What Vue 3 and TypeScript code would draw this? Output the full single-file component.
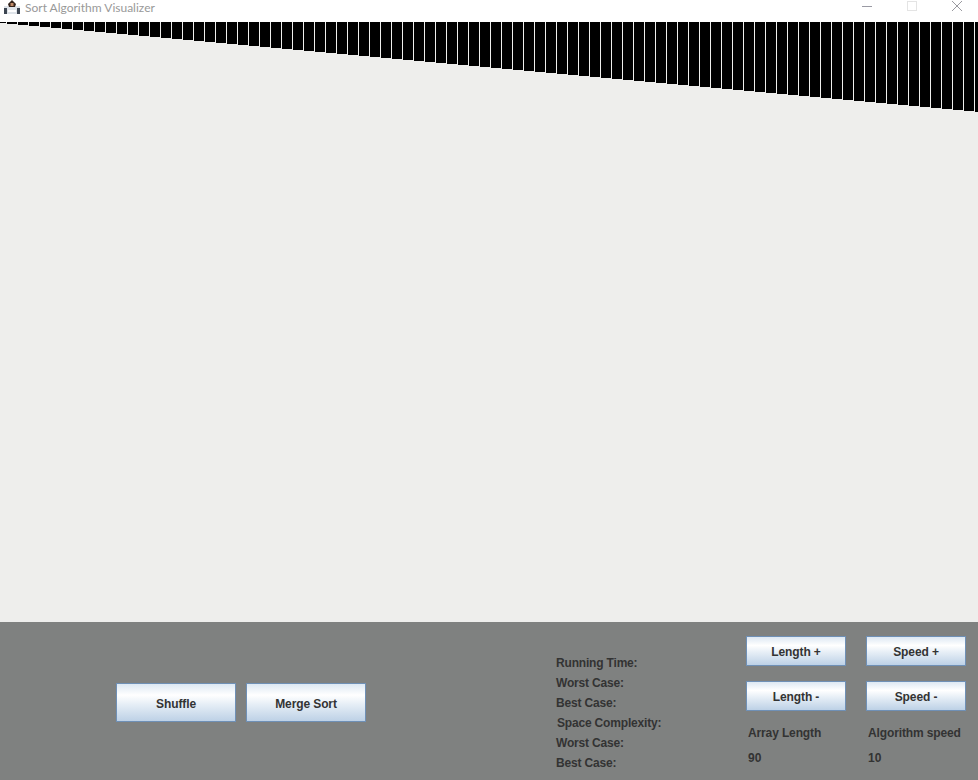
<script setup lang="ts">
const bars: number[] = Array.from({ length: 90 }, (_, i) => i + 1)
const timeLabels: string[] = [
  'Running Time:',
  'Worst Case:',
  'Best Case:',
  'Space Complexity:',
  'Worst Case:',
  'Best Case:',
]
</script>

<template>
  <div class="window">
    <header class="titlebar">
      <svg class="app-icon" width="16" height="16" viewBox="0 0 16 16">
        <rect x="0" y="6" width="16" height="8" fill="#dfe4ea" />
        <rect x="0" y="8" width="3" height="6" fill="#3d4652" />
        <rect x="13" y="8" width="3" height="6" fill="#3d4652" />
        <rect x="4" y="10" width="8" height="2" fill="#ffffff" />
        <path d="M8 0 L12 4 L11 7 L5 7 L4 4 Z" fill="#33231b" />
        <rect x="6.5" y="3" width="3" height="3" fill="#c08a68" />
      </svg>
      <span class="title">Sort Algorithm Visualizer</span>
      <div class="controls">
        <svg class="ctl min" width="10" height="10" viewBox="0 0 10 10">
          <path d="M0 5.5H10" stroke="#9a9aa4" stroke-width="1" />
        </svg>
        <svg class="ctl max" width="10" height="10" viewBox="0 0 10 10">
          <rect x="0.5" y="0.5" width="9" height="9" fill="none" stroke="#e4e4e4" stroke-width="1" />
        </svg>
        <svg class="ctl close" width="10" height="10" viewBox="0 0 10 10">
          <path d="M0 0L10 10M10 0L0 10" stroke="#9a9aa0" stroke-width="1" />
        </svg>
      </div>
    </header>

    <main class="canvas">
      <div class="bars">
        <div v-for="h in bars" :key="h" class="bar" :style="{ height: h + 'px' }"></div>
      </div>
    </main>

    <footer class="panel">
      <div class="main-actions">
        <button class="btn wide">Shuffle</button>
        <button class="btn wide">Merge Sort</button>
      </div>
      <div class="info">
        <div v-for="(t, i) in timeLabels" :key="i" class="info-line" :class="{ nudge: i === 3 }">{{ t }}</div>
      </div>
      <div class="settings">
        <div class="col">
          <button class="btn small">Length +</button>
          <button class="btn small">Length -</button>
          <div class="cap">Array Length</div>
          <div class="val">90</div>
        </div>
        <div class="col">
          <button class="btn small">Speed +</button>
          <button class="btn small">Speed -</button>
          <div class="cap">Algorithm speed</div>
          <div class="val">10</div>
        </div>
      </div>
    </footer>
  </div>
</template>

<style>
html, body { margin: 0; padding: 0; background: #eeeeec; }
</style>

<style scoped>
.window {
  width: 978px;
  height: 780px;
  display: flex;
  flex-direction: column;
  overflow: hidden;
  font-family: "Liberation Sans", Arial, sans-serif;
}
.titlebar {
  height: 22px;
  flex: none;
  background: #ffffff;
  display: flex;
  align-items: flex-start;
  padding-left: 4px;
  box-sizing: border-box;
}
.app-icon { flex: none; }
.title {
  font-family: Lato, "Open Sans", sans-serif;
  font-size: 12px;
  line-height: 15px;
  color: #999999;
  margin-left: 5px;
}
.controls {
  margin-left: auto;
  display: flex;
  padding-top: 1px;
}
.ctl { display: block; flex: none; }
.min { margin-right: 35px; }
.max { margin-right: 35px; }
.close { margin-right: 16px; }

.canvas {
  height: 600px;
  flex: none;
  background: #eeeeec;
  overflow: hidden;
}
.bars {
  display: flex;
  gap: 1px;
  align-items: flex-start;
  margin-left: -4px;
}
.bar {
  width: 10px;
  flex: none;
  background: #000000;
}

.panel {
  flex: 1;
  background: #7f8180;
  display: flex;
  align-items: flex-start;
  color: #333333;
  font-weight: 700;
  font-size: 12px;
}
.btn {
  display: block;
  box-sizing: border-box;
  margin: 0;
  padding: 2px 0 0;
  border: 1px solid #6f90b6;
  background: linear-gradient(180deg, #dde8f3 0%, #ffffff 30%, #e6eef6 55%, #bdd1e6 100%);
  font-family: "Liberation Sans", Arial, sans-serif;
  font-weight: 700;
  font-size: 12px;
  letter-spacing: -0.1px;
  color: #333333;
}
.main-actions {
  display: flex;
  gap: 10px;
  margin-left: 116px;
  margin-top: 61px;
}
.wide { width: 120px; height: 39px; }
.info {
  margin-left: 190px;
  margin-top: 31px;
  letter-spacing: -0.18px;
}
.info-line {
  height: 20px;
  line-height: 20px;
}
.nudge { padding-left: 1px; }
.settings {
  display: flex;
  gap: 20px;
  margin-left: auto;
  margin-right: 12px;
  margin-top: 14px;
}
.col { width: 100px; }
.small { width: 100px; height: 30px; margin-bottom: 15px; }
.cap {
  padding-left: 2px;
  line-height: 14px;
  white-space: nowrap;
  letter-spacing: -0.13px;
}
.val {
  padding-left: 2px;
  line-height: 14px;
  margin-top: 11px;
}
</style>
